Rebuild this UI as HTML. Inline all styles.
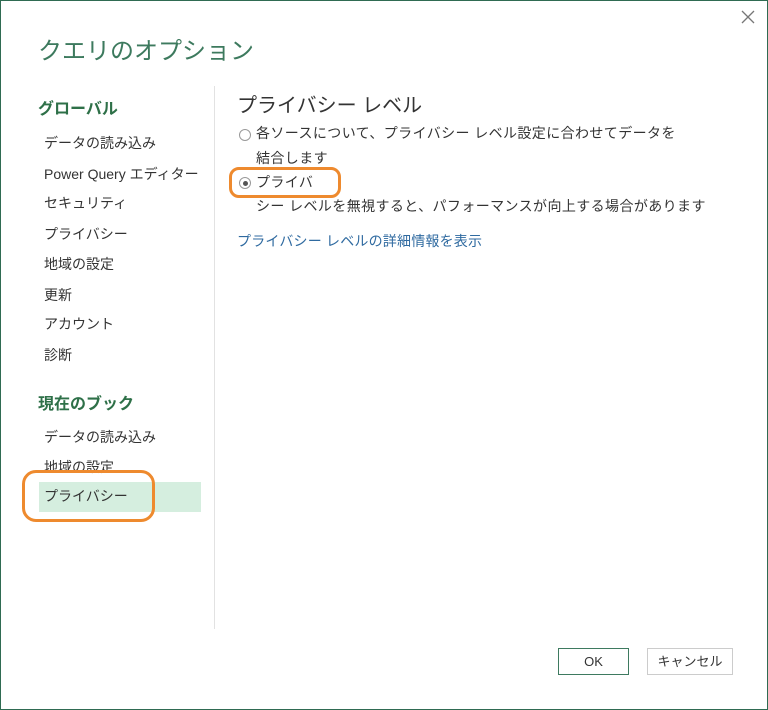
<!DOCTYPE html>
<html><head><meta charset="utf-8"><style>
body{margin:0;width:768px;height:710px;overflow:hidden;background:#fff;font-family:"Liberation Sans","Noto Sans CJK JP",sans-serif;}
.win{position:absolute;left:0;top:0;width:766px;height:708px;border:1px solid #2f6b52;background:#fff;}
.t{position:absolute;white-space:nowrap;}
.title{left:37px;top:30px;font-size:24px;color:#3d7a5e;}
.h{font-size:16px;font-weight:bold;color:#2e7048;}
.it{left:43px;font-size:14px;color:#333;}
.sel{position:absolute;left:38px;top:481px;width:162px;height:30px;background:#d5eedf;}
.div{position:absolute;left:213px;top:85px;width:1px;height:543px;background:#e2e2e2;}
.r{font-size:14px;color:#333;letter-spacing:0.4px;}
.rad{position:absolute;width:10px;height:10px;border:1px solid #999;border-radius:50%;background:#fff;}
.oval{position:absolute;border:3px solid #ee8a2e;border-radius:10px;}
.btn{position:absolute;height:25px;font-size:13px;color:#333;text-align:center;line-height:25px;background:#fff;}
</style></head><body><div class="win">
<svg style="position:absolute;left:740px;top:9px" width="14" height="14"><path d="M1 1L13 13M13 1L1 13" stroke="#777" stroke-width="1.3"/></svg>
<div class="t title">クエリのオプション</div>
<div class="sel"></div>
<div class="t h" style="left:37px;top:94px;">グローバル</div>
<div class="t it" style="top:132px;">データの読み込み</div>
<div class="t it" style="top:163px;">Power Query エディター</div>
<div class="t it" style="top:192px;">セキュリティ</div>
<div class="t it" style="top:223px;">プライバシー</div>
<div class="t it" style="top:253px;">地域の設定</div>
<div class="t it" style="top:284px;">更新</div>
<div class="t it" style="top:313px;">アカウント</div>
<div class="t it" style="top:344px;">診断</div>
<div class="t h" style="left:37px;top:389px;">現在のブック</div>
<div class="t it" style="top:426px;">データの読み込み</div>
<div class="t it" style="top:456px;">地域の設定</div>
<div class="t it" style="top:485px;">プライバシー</div>
<div class="oval" style="left:21px;top:469px;width:127px;height:46px;border-radius:14px;"></div>
<div class="div"></div>
<div class="t" style="left:236px;top:88px;font-size:20px;color:#333;">プライバシー レベル</div>
<div class="rad" style="left:238px;top:128px;"></div>
<div class="t r" style="left:255px;top:122px;">各ソースについて、プライバシー レベル設定に合わせてデータを</div>
<div class="t r" style="left:255px;top:147px;">結合します</div>
<div class="rad" style="left:238px;top:176px;"></div>
<div style="position:absolute;left:241.5px;top:179.5px;width:5px;height:5px;border-radius:50%;background:#555;"></div>
<div class="t r" style="left:255px;top:171px;">プライバ</div>
<div class="t r" style="left:255px;top:195px;">シー レベルを無視すると、パフォーマンスが向上する場合があります</div>
<div class="oval" style="left:228px;top:166px;width:106px;height:25px;"></div>
<div class="t" style="left:236px;top:230px;font-size:14px;color:#2f6aa0;letter-spacing:0.2px;">プライバシー レベルの詳細情報を表示</div>
<div class="btn" style="left:557px;top:647px;width:69px;border:1px solid #3e7a60;">OK</div>
<div class="btn" style="left:646px;top:647px;width:84px;border:1px solid #ccc;">キャンセル</div>
</div></body></html>
